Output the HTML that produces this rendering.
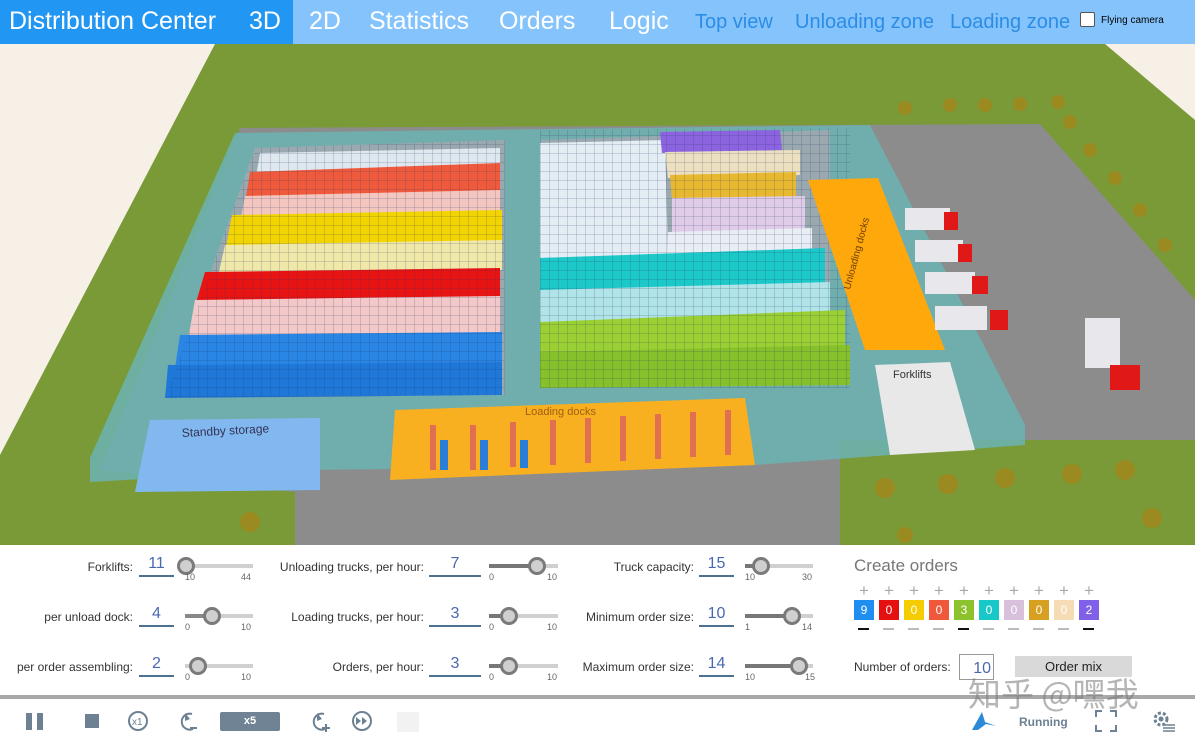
<!DOCTYPE html>
<html><head><meta charset="utf-8"><style>
*{margin:0;padding:0;box-sizing:border-box}
body{width:1195px;height:741px;overflow:hidden;background:#fff;font-family:"Liberation Sans","Noto Sans CJK SC",sans-serif;position:relative}
.hdr{position:absolute;left:0;top:0;width:1195px;height:44px;background:#84c3fb}
.hdr .dk{position:absolute;left:0;top:0;width:293px;height:44px;background:#2196f3}
.hdr span{position:absolute;top:7px;color:#fff;font-size:25px;white-space:nowrap}
.hdr span.s{color:#2b8de6;font-size:20px;top:11px}
.ab{position:absolute;white-space:nowrap}
.lbl{font-size:12px;color:#333;text-align:right}
.num{font-size:16px;color:#4a68b0;text-align:center;border-bottom:2px solid #4d7190;height:22px}
.tr{height:4px;background:#d0d0d0}
.th{width:18px;height:18px;border-radius:50%;background:#cfcfcf;border:3px solid #7a7a7a}
.mn{font-size:9px;color:#666}
.ob{width:20px;height:20px;color:#fff;font-size:12px;text-align:center;line-height:20px}
.pl{font-size:17px;color:#aaa;width:20px;text-align:center}
.ds{width:11px;height:2px;background:#bbb}
</style></head><body>
<div class="hdr"><div class="dk"></div>
<span style="left:9px">Distribution Center</span><span style="left:249px">3D</span>
<span style="left:309px">2D</span><span style="left:369px">Statistics</span><span style="left:499px">Orders</span><span style="left:609px">Logic</span>
<span class="s" style="left:695px">Top view</span><span class="s" style="left:795px">Unloading zone</span><span class="s" style="left:950px">Loading zone</span>
<div class="ab" style="left:1080px;top:12px;width:15px;height:15px;background:#fff;border:1px solid #555;border-radius:2px"></div>
<span style="left:1101px;top:15px;font-size:10px;color:#000">Flying camera</span>
</div>
<svg class="ab" style="left:0;top:44px" width="1195" height="501" viewBox="0 44 1195 501">
<defs>
<pattern id="g" width="9" height="9" patternUnits="userSpaceOnUse"><path d="M0 0V9M0 0H9" stroke="#203060" stroke-width="1" opacity=".35"/></pattern>
</defs>
<rect x="0" y="44" width="1195" height="501" fill="#f6f0e6"/>
<polygon points="215,44 1105,44 1195,120 1195,545 0,545 0,455" fill="#7a9a38"/>
<polygon points="240,128 1040,124 1195,300 1195,440 840,440 840,545 295,545 295,492 100,470" fill="#8c8c8c"/>
<polygon points="235,133 870,125 1025,425 1025,445 755,465 300,470 90,482 90,458" fill="#6bb4b4" opacity=".85"/>
<polygon points="255,148 505,140 505,395 165,398" fill="#9aa9b0"/>
<g>
<polygon points="260,153 500,148 500,175 255,182" fill="#dfe8ee"/>
<polygon points="250,172 500,163 500,195 245,203" fill="#f05a3c"/>
<polygon points="245,196 500,190 500,218 240,224" fill="#f4c6c0"/>
<polygon points="232,215 502,210 502,246 225,252" fill="#f2d400"/>
<polygon points="225,245 502,240 502,270 218,276" fill="#f0e8a8"/>
<polygon points="205,272 500,268 500,300 195,306" fill="#e81414"/>
<polygon points="195,300 500,296 500,335 188,340" fill="#f2c8c8"/>
<polygon points="180,335 502,332 502,362 175,368" fill="#2a86e4"/>
<polygon points="168,365 502,362 502,395 165,398" fill="#1f78d8"/>
<polygon points="540,140 830,130 830,385 540,385" fill="#9aa9b0"/>
<polygon points="540,143 665,140 668,255 540,258" fill="#e4ecf4"/>
<polygon points="660,132 780,130 782,150 662,153" fill="#8c64e0"/>
<polygon points="665,152 800,150 800,175 668,178" fill="#ece0c0"/>
<polygon points="670,175 796,172 796,198 672,200" fill="#e8b830"/>
<polygon points="672,198 805,196 805,232 672,236" fill="#e0cce8"/>
<polygon points="668,232 812,228 812,252 668,256" fill="#e8eef4"/>
<polygon points="540,258 825,248 825,290 540,296" fill="#1cc8c8"/>
<polygon points="540,290 830,282 830,320 540,325" fill="#b0e4e8"/>
<polygon points="540,322 845,310 845,350 540,355" fill="#9ad034"/>
<polygon points="540,352 850,345 850,385 540,388" fill="#86c02a"/>
</g>
<polygon points="255,148 505,140 505,395 165,398" fill="url(#g)"/>
<polygon points="540,130 850,128 850,388 540,388" fill="url(#g)"/>
<polygon points="808,180 878,178 945,350 865,350" fill="#ffa80c"/>
<polygon points="395,410 745,398 755,465 390,480" fill="#f8b020"/>
<g fill="#e07050"><rect x="430" y="425" width="6" height="45"/><rect x="470" y="425" width="6" height="45"/><rect x="510" y="422" width="6" height="45"/><rect x="550" y="420" width="6" height="45"/><rect x="585" y="418" width="6" height="45"/><rect x="620" y="416" width="6" height="45"/><rect x="655" y="414" width="6" height="45"/><rect x="690" y="412" width="6" height="45"/><rect x="725" y="410" width="6" height="45"/></g>
<g fill="#2a7ed8"><rect x="440" y="440" width="8" height="30"/><rect x="480" y="440" width="8" height="30"/><rect x="520" y="440" width="8" height="28"/></g>
<polygon points="150,420 320,418 320,490 135,492" fill="#82b8f0"/>
<polygon points="875,365 950,362 975,450 890,455" fill="#e8e8e8"/>
<g fill="#e8e8ec"><rect x="905" y="208" width="45" height="22"/><rect x="915" y="240" width="48" height="22"/><rect x="925" y="272" width="50" height="22"/><rect x="935" y="306" width="52" height="24"/><rect x="1085" y="318" width="35" height="50"/></g>
<g fill="#e01818"><rect x="944" y="212" width="14" height="18"/><rect x="958" y="244" width="14" height="18"/><rect x="972" y="276" width="16" height="18"/><rect x="990" y="310" width="18" height="20"/><rect x="1110" y="365" width="30" height="25"/></g>
<g fill="#9a8a20"><circle cx="905" cy="108" r="7"/><circle cx="950" cy="105" r="7"/><circle cx="985" cy="105" r="7"/><circle cx="1020" cy="104" r="7"/><circle cx="1058" cy="102" r="7"/><circle cx="1070" cy="122" r="7"/><circle cx="1090" cy="150" r="7"/><circle cx="1115" cy="178" r="7"/><circle cx="1140" cy="210" r="7"/><circle cx="1165" cy="245" r="7"/><circle cx="885" cy="488" r="10"/><circle cx="948" cy="484" r="10"/><circle cx="1005" cy="478" r="10"/><circle cx="1072" cy="474" r="10"/><circle cx="1125" cy="470" r="10"/><circle cx="1152" cy="518" r="10"/><circle cx="905" cy="535" r="8"/><circle cx="250" cy="522" r="10"/></g>
<text x="182" y="437" font-size="12" fill="#335" transform="rotate(-3 182 437)">Standby storage</text>
<text x="893" y="378" font-size="11" fill="#333">Forklifts</text>
<text x="525" y="415" font-size="11" fill="#a06010">Loading docks</text>
<text x="850" y="290" font-size="10" fill="#704000" transform="rotate(-75 850 290)">Unloading docks</text>
</svg>
<!-- controls -->
<div class="ab" style="left:0;top:545px;width:1195px;height:150px;background:#fff"></div>
<div class="ab" style="left:0;top:695px;width:1195px;height:4px;background:#a8a8a8"></div>

<div class="ab lbl" style="left:0;top:560px;width:133px">Forklifts:</div>
<div class="ab num" style="left:139px;top:555px;width:35px">11</div>
<div class="ab tr" style="left:185px;top:564px;width:68px"></div><div class="ab th" style="left:177px;top:557px"></div>
<div class="ab mn" style="left:185px;top:572px">10</div><div class="ab mn" style="left:241px;top:572px">44</div>

<div class="ab lbl" style="left:0;top:610px;width:133px">per unload dock:</div>
<div class="ab num" style="left:139px;top:605px;width:35px">4</div>
<div class="ab tr" style="left:185px;top:614px;width:68px"></div><div class="ab tr" style="left:185px;top:614px;width:25px;background:#888"></div><div class="ab th" style="left:203px;top:607px"></div>
<div class="ab mn" style="left:185px;top:622px">0</div><div class="ab mn" style="left:241px;top:622px">10</div>

<div class="ab lbl" style="left:0;top:660px;width:133px">per order assembling:</div>
<div class="ab num" style="left:139px;top:655px;width:35px">2</div>
<div class="ab tr" style="left:185px;top:664px;width:68px"></div><div class="ab th" style="left:189px;top:657px"></div>
<div class="ab mn" style="left:185px;top:672px">0</div><div class="ab mn" style="left:241px;top:672px">10</div>

<div class="ab lbl" style="left:240px;top:560px;width:184px">Unloading trucks, per hour:</div>
<div class="ab num" style="left:429px;top:555px;width:52px">7</div>
<div class="ab tr" style="left:489px;top:564px;width:69px"></div><div class="ab tr" style="left:489px;top:564px;width:45px;background:#777"></div><div class="ab th" style="left:528px;top:557px"></div>
<div class="ab mn" style="left:489px;top:572px">0</div><div class="ab mn" style="left:547px;top:572px">10</div>

<div class="ab lbl" style="left:240px;top:610px;width:184px">Loading trucks, per hour:</div>
<div class="ab num" style="left:429px;top:605px;width:52px">3</div>
<div class="ab tr" style="left:489px;top:614px;width:69px"></div><div class="ab tr" style="left:489px;top:614px;width:18px;background:#777"></div><div class="ab th" style="left:500px;top:607px"></div>
<div class="ab mn" style="left:489px;top:622px">0</div><div class="ab mn" style="left:547px;top:622px">10</div>

<div class="ab lbl" style="left:240px;top:660px;width:184px">Orders, per hour:</div>
<div class="ab num" style="left:429px;top:655px;width:52px">3</div>
<div class="ab tr" style="left:489px;top:664px;width:69px"></div><div class="ab tr" style="left:489px;top:664px;width:18px;background:#777"></div><div class="ab th" style="left:500px;top:657px"></div>
<div class="ab mn" style="left:489px;top:672px">0</div><div class="ab mn" style="left:547px;top:672px">10</div>

<div class="ab lbl" style="left:560px;top:560px;width:134px">Truck capacity:</div>
<div class="ab num" style="left:699px;top:555px;width:35px">15</div>
<div class="ab tr" style="left:745px;top:564px;width:68px"></div><div class="ab tr" style="left:745px;top:564px;width:12px;background:#777"></div><div class="ab th" style="left:752px;top:557px"></div>
<div class="ab mn" style="left:745px;top:572px">10</div><div class="ab mn" style="left:802px;top:572px">30</div>

<div class="ab lbl" style="left:560px;top:610px;width:134px">Minimum order size:</div>
<div class="ab num" style="left:699px;top:605px;width:35px">10</div>
<div class="ab tr" style="left:745px;top:614px;width:68px"></div><div class="ab tr" style="left:745px;top:614px;width:45px;background:#777"></div><div class="ab th" style="left:783px;top:607px"></div>
<div class="ab mn" style="left:745px;top:622px">1</div><div class="ab mn" style="left:802px;top:622px">14</div>

<div class="ab lbl" style="left:560px;top:660px;width:134px">Maximum order size:</div>
<div class="ab num" style="left:699px;top:655px;width:35px">14</div>
<div class="ab tr" style="left:745px;top:664px;width:68px"></div><div class="ab tr" style="left:745px;top:664px;width:50px;background:#777"></div><div class="ab th" style="left:790px;top:657px"></div>
<div class="ab mn" style="left:745px;top:672px">10</div><div class="ab mn" style="left:805px;top:672px">15</div>

<div class="ab" style="left:854px;top:556px;font-size:17px;color:#777">Create orders</div>
<div class="ab pl" style="left:854px;top:581px">+</div><div class="ab pl" style="left:879px;top:581px">+</div><div class="ab pl" style="left:904px;top:581px">+</div><div class="ab pl" style="left:929px;top:581px">+</div><div class="ab pl" style="left:954px;top:581px">+</div><div class="ab pl" style="left:979px;top:581px">+</div><div class="ab pl" style="left:1004px;top:581px">+</div><div class="ab pl" style="left:1029px;top:581px">+</div><div class="ab pl" style="left:1054px;top:581px">+</div><div class="ab pl" style="left:1079px;top:581px">+</div>
<div class="ab ob" style="left:854px;top:600px;background:#1e8ef0">9</div>
<div class="ab ob" style="left:879px;top:600px;background:#e51010">0</div>
<div class="ab ob" style="left:904px;top:600px;background:#f4cc00">0</div>
<div class="ab ob" style="left:929px;top:600px;background:#f0583c">0</div>
<div class="ab ob" style="left:954px;top:600px;background:#8cc22c">3</div>
<div class="ab ob" style="left:979px;top:600px;background:#18c8c8">0</div>
<div class="ab ob" style="left:1004px;top:600px;background:#d8c0dc">0</div>
<div class="ab ob" style="left:1029px;top:600px;background:#d8a020">0</div>
<div class="ab ob" style="left:1054px;top:600px;background:#f6dcb4">0</div>
<div class="ab ob" style="left:1079px;top:600px;background:#8060e8">2</div>
<div class="ab ds" style="left:858px;top:628px;background:#111"></div><div class="ab ds" style="left:883px;top:628px"></div><div class="ab ds" style="left:908px;top:628px"></div><div class="ab ds" style="left:933px;top:628px"></div><div class="ab ds" style="left:958px;top:628px;background:#111"></div><div class="ab ds" style="left:983px;top:628px"></div><div class="ab ds" style="left:1008px;top:628px"></div><div class="ab ds" style="left:1033px;top:628px"></div><div class="ab ds" style="left:1058px;top:628px"></div><div class="ab ds" style="left:1083px;top:628px;background:#111"></div>
<div class="ab" style="left:854px;top:660px;font-size:12px;color:#333">Number of orders:</div>
<div class="ab" style="left:959px;top:654px;width:35px;height:26px;border:1px solid #999;font-size:16px;color:#4a68b0;text-align:right;padding:5px 2px 0 0">10</div>
<div class="ab" style="left:1015px;top:656px;width:117px;height:21px;background:#d9d9d9;font-size:13px;color:#222;text-align:center;line-height:21px">Order mix</div>
<div class="ab" style="left:968px;top:668px;font-size:33px;color:rgba(120,120,120,.55);font-family:'Noto Sans CJK SC',sans-serif">知乎 @嘿我</div>

<!-- toolbar -->
<div class="ab" style="left:26px;top:713px;width:6px;height:17px;background:#6d8193"></div><div class="ab" style="left:37px;top:713px;width:6px;height:17px;background:#6d8193"></div>
<div class="ab" style="left:85px;top:714px;width:14px;height:14px;background:#6d8193"></div>
<svg class="ab" style="left:126px;top:709px" width="300" height="26">
<circle cx="12" cy="12" r="9" fill="none" stroke="#6d8193" stroke-width="2"/><text x="6" y="16" font-size="10" fill="#6d8193" font-family="Liberation Sans">x1</text>
<path d="M66 5 A8 8 0 1 0 67 20" fill="none" stroke="#6d8193" stroke-width="2"/><path d="M59 4 L59 12 L64 10Z" fill="#6d8193"/><path d="M64 19 h7" stroke="#6d8193" stroke-width="2"/>
<path d="M198 5 A8 8 0 1 0 199 20" fill="none" stroke="#6d8193" stroke-width="2"/><path d="M191 4 L191 12 L196 10Z" fill="#6d8193"/><path d="M196 19 h8 M200 15 v8" stroke="#6d8193" stroke-width="2"/>
<circle cx="236" cy="12" r="9" fill="none" stroke="#6d8193" stroke-width="2"/><path d="M230 8 l5 4 -5 4Z M236 8 l5 4 -5 4Z" fill="#6d8193"/>
</svg>
<div class="ab" style="left:220px;top:712px;width:60px;height:19px;background:#6f8394;border-radius:2px;color:#fff;font-size:11px;font-weight:bold;text-align:center;line-height:19px">x5</div>
<div class="ab" style="left:397px;top:712px;width:22px;height:20px;background:#f2f2f2"></div>
<svg class="ab" style="left:970px;top:708px" width="30" height="26"><path d="M2 22 L12 4 L15 14 L26 18 L16 16 L8 22 Z" fill="#2d8ad6"/></svg>
<div class="ab" style="left:1019px;top:715px;font-size:12px;font-weight:bold;color:#6d8193">Running</div>
<svg class="ab" style="left:1095px;top:710px" width="22" height="22" fill="none" stroke="#6d8193" stroke-width="2"><path d="M1 7V1h6M15 1h6v6M21 15v6h-6M7 21H1v-6"/></svg>
<svg class="ab" style="left:1152px;top:710px" width="24" height="24"><circle cx="9" cy="9" r="6" fill="none" stroke="#6d8193" stroke-width="3" stroke-dasharray="3 2"/><circle cx="9" cy="9" r="2.5" fill="#6d8193"/><path d="M11 15h12M11 18h12M11 21h12" stroke="#6d8193" stroke-width="1.5"/></svg>
</body></html>
